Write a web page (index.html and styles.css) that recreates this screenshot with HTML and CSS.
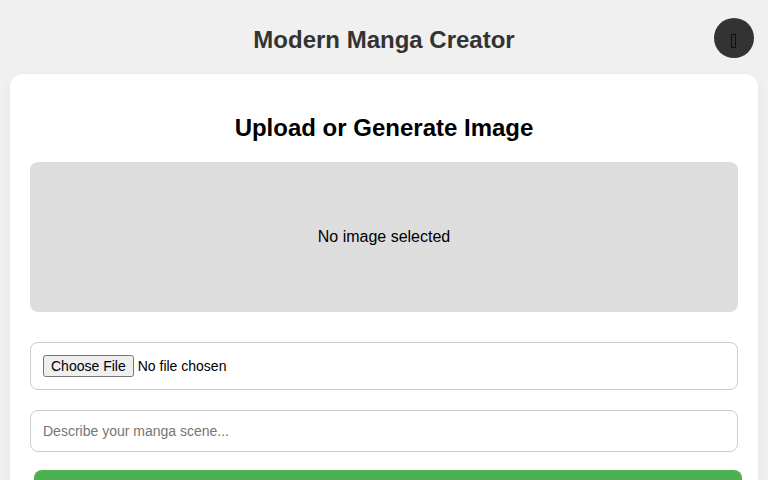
FILE: index.html
```html
<!DOCTYPE html>
<html lang="en">

<head>
  <meta charset="UTF-8">
  <meta name="viewport" content="width=device-width, initial-scale=1.0">
  <title>Modern Manga Creator</title>
  <link rel="stylesheet" href="styles.css">
</head>

<body>
  <header class="top">
    <h1>Modern Manga Creator</h1>
    <button class="theme-toggle" type="button"><span class="missing-glyph"></span></button>
  </header>

  <main class="card">
    <h2>Upload or Generate Image</h2>
    <div class="preview">No image selected</div>
    <input class="field file-field" type="file">
    <input class="field text-field" type="text" placeholder="Describe your manga scene...">
    <button class="primary" type="button">Generate Image</button>
  </main>
</body>

</html>
```

FILE: styles.css
```css
* {
  box-sizing: border-box;
}

body {
  margin: 0;
  padding: 0 10px 20px;
  font-family: "Liberation Sans", Arial, sans-serif;
  background-color: #f0f0f0;
  color: #000;
}

.top {
  display: flex;
  justify-content: center;
  align-items: center;
  position: relative;
  height: 74px;
  padding-top: 6px;
}

.top h1 {
  margin: 0;
  font-size: 24px;
  font-weight: bold;
  color: #333;
}

.theme-toggle {
  display: flex;
  justify-content: center;
  align-items: center;
  position: absolute;
  top: 18px;
  right: 4px;
  width: 40px;
  height: 40px;
  padding: 5px 1px 0 0;
  border: none;
  border-radius: 50%;
  background-color: #333;
}

.missing-glyph {
  display: block;
  width: 5px;
  height: 14px;
  border: 1px solid #111;
}

.card {
  display: flex;
  flex-direction: column;
  padding: 20px;
  background-color: #fff;
  border-radius: 12px;
  box-shadow: 0 2px 10px rgba(0, 0, 0, 0.05);
}

.card h2 {
  margin: 20px 0;
  font-size: 24px;
  line-height: 28px;
  text-align: center;
}

.preview {
  display: flex;
  justify-content: center;
  align-items: center;
  height: 150px;
  margin-bottom: 30px;
  background-color: #ddd;
  border-radius: 8px;
  font-size: 16px;
}

.field {
  display: block;
  width: 100%;
  padding: 12px;
  border: 1px solid #ccc;
  border-radius: 8px;
  background-color: #fff;
  font-family: inherit;
  font-size: 14px;
}

.file-field {
  height: 48px;
  margin-bottom: 20px;
}

.text-field {
  height: 42px;
  margin-bottom: 18px;
}

.primary {
  width: 100%;
  margin-left: 4px;
  margin-right: -4px;
  padding: 20px 14px;
  border: none;
  border-radius: 8px;
  background-color: #4caf50;
  color: #fff;
  font-size: 16px;
}
```
